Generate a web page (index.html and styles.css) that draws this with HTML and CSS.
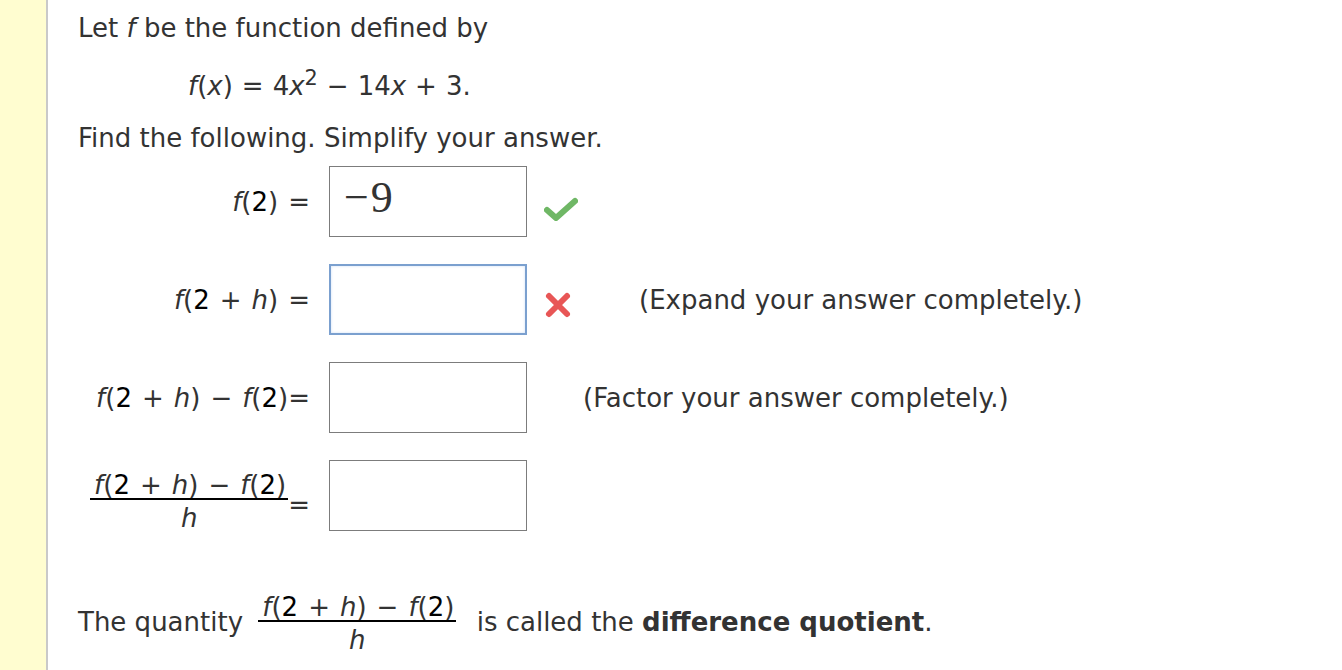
FILE: index.html
```html
<!DOCTYPE html>
<html lang="en">
<head>
    <meta charset="UTF-8">
    <title>Difference quotient</title>
    <link rel="stylesheet" href="styles.css">
</head>
<body>
    <div class="page">
        <aside class="strip"></aside>

        <main class="question">
            <p class="line">Let <i>f</i> be the function defined by</p>
            <p class="line formula"><i>f</i>(<i>x</i>)<span class="op">=</span>4<i>x</i><sup>2</sup><span class="op">&minus;</span>14<i>x</i><span class="op">+</span>3.</p>
            <p class="line">Find the following. Simplify your answer.</p>

            <div class="answers">
                <div class="row">
                    <span class="label"><i>f</i>(<b>2</b>)<span class="op last">=</span></span>
                    <div class="box"><span class="value">&minus;9</span></div>
                    <span class="mark check">
                        <svg width="34" height="24" viewBox="0 0 34 24">
                            <path d="M3 13 L12 21 L31 4" fill="none" stroke="#6fb765" stroke-width="6" stroke-linecap="round" stroke-linejoin="round"/>
                        </svg>
                    </span>
                </div>

                <div class="row">
                    <span class="label"><i>f</i>(<b>2</b><span class="op">+</span><i>h</i>)<span class="op last">=</span></span>
                    <div class="box active"></div>
                    <span class="mark cross">
                        <svg width="28" height="28" viewBox="0 0 28 28">
                            <path d="M5 5 L23 23 M23 5 L5 23" fill="none" stroke="#e85656" stroke-width="6" stroke-linecap="round"/>
                        </svg>
                    </span>
                    <span class="note expand">(Expand your answer completely.)</span>
                </div>

                <div class="row">
                    <span class="label"><i>f</i>(<b>2</b><span class="op">+</span><i>h</i>)<span class="op">&minus;</span><i>f</i>(<b>2</b>)=</span>
                    <div class="box"></div>
                    <span class="note factor">(Factor your answer completely.)</span>
                </div>

                <div class="row">
                    <span class="label">
                        <span class="frac">
                            <span class="num"><i>f</i>(<b>2</b><span class="op">+</span><i>h</i>)<span class="op">&minus;</span><i>f</i>(<b>2</b>)</span>
                            <span class="den"><i>h</i></span>
                        </span><span class="eq">=</span>
                    </span>
                    <div class="box"></div>
                </div>
            </div>

            <p class="line closing">The quantity
                <span class="frac inline">
                    <span class="num"><i>f</i>(<b>2</b><span class="op">+</span><i>h</i>)<span class="op">&minus;</span><i>f</i>(<b>2</b>)</span>
                    <span class="den"><i>h</i></span>
                </span>
                is called the <strong>difference quotient</strong>.</p>
        </main>
    </div>
</body>
</html>
```

FILE: styles.css
```css
html, body {
    margin: 0;
    height: 100%;
}
body {
    font-family: "DejaVu Sans", Verdana, sans-serif;
    font-size: 26px;
    color: #333333;
    background: #ffffff;
}
i {
    font-style: italic;
}
b {
    font-weight: normal;
    color: #000000;
}
.op {
    margin: 0 10px;
}
.op.last {
    margin-right: 0;
}

.page {
    display: flex;
    min-height: 670px;
}
.strip {
    width: 46px;
    flex: none;
    background: #fffdd0;
    border-right: 2px solid #c9c9c9;
}
.question {
    padding: 12px 0 0 30px;
}

.line {
    margin: 0;
    line-height: 32px;
}
.formula {
    margin: 26px 0 20px 110px;
}
.formula .op {
    margin: 0 9px;
}
.formula sup {
    font-size: 0.8em;
    line-height: 0;
}

.answers {
    margin-top: 12px;
}
.row {
    display: flex;
    align-items: center;
    height: 71px;
    margin-bottom: 27px;
}
.label {
    width: 232px;
    display: flex;
    justify-content: flex-end;
    align-items: center;
    padding-right: 19px;
    white-space: nowrap;
}
.box {
    width: 196px;
    height: 69px;
    border: 1px solid #7c7c7c;
    box-sizing: content-box;
    display: flex;
    align-items: center;
}
.box.active {
    border: 2px solid #7ba0cf;
    width: 194px;
    height: 67px;
    box-shadow: inset 0 0 3px #cfe0f5;
}
.value {
    font-family: "Liberation Serif", "Times New Roman", serif;
    font-size: 44px;
    letter-spacing: 2px;
    color: #333333;
    padding-left: 14px;
    margin-top: -8px;
}
.mark {
    width: 40px;
    margin-left: 17px;
    display: flex;
    align-items: center;
}
.mark.check svg {
    margin-top: 14px;
}
.mark.cross svg {
    margin-top: 10px;
}
.note.expand {
    margin-left: 55px;
}
.note.factor {
    margin-left: 56px;
}

.frac {
    display: inline-flex;
    flex-direction: column;
    align-items: center;
    vertical-align: middle;
}
.frac .num {
    border-bottom: 2px solid #000000;
    padding: 0 2px 0 4px;
    line-height: 26px;
}
.frac .den {
    line-height: 36px;
}
.label .frac {
    margin-top: 16px;
}
.eq {
    align-self: center;
    margin-top: 18px;
}

.closing {
    margin-top: 57px;
}
.frac.inline {
    margin: 0 12px 0 7px;
}
.frac.inline .num {
    padding-top: 6px;
}
```
